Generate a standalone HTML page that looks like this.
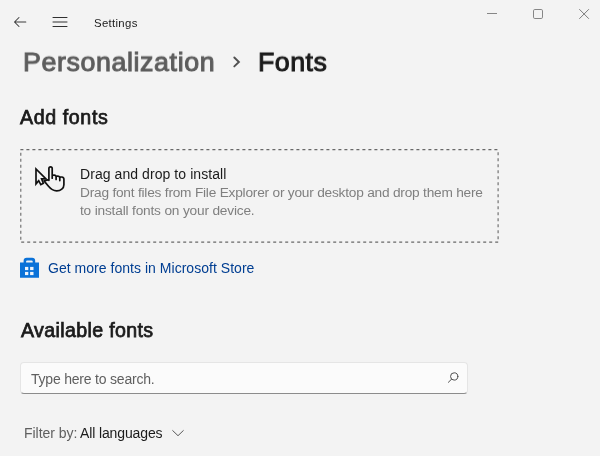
<!DOCTYPE html>
<html lang="en">
<head>
<meta charset="utf-8">
<title>Settings</title>
<style>
html,body{margin:0;padding:0;}
body{width:600px;height:456px;overflow:hidden;background:#f3f3f3;position:relative;font-family:"Liberation Sans",sans-serif;color:#1b1b1b;}
.t{position:absolute;white-space:nowrap;line-height:1;transform-origin:0 0;will-change:transform;}
svg{position:absolute;overflow:visible;}
#title{left:94px;top:17.600px;font-size:11.4px;letter-spacing:0.31px;color:#1b1b1b;}
#crumb1{left:23.200px;top:49.900px;transform:scaleY(0.956);font-size:26.8px;letter-spacing:0.6px;color:#5d5d5d;-webkit-text-stroke:1px #5d5d5d;}
#crumb2{left:258.200px;top:49.900px;transform:scaleY(0.956);font-size:26.8px;letter-spacing:0.45px;color:#1b1b1b;-webkit-text-stroke:1px #1b1b1b;}
#h1{left:20.4px;top:107.5px;font-size:19.6px;letter-spacing:0.62px;-webkit-text-stroke:0.75px #1b1b1b;}
#h2{left:20.5px;top:320.5px;font-size:19.6px;letter-spacing:0.36px;-webkit-text-stroke:0.75px #1b1b1b;}
#d1{left:80px;top:167px;font-size:14px;letter-spacing:0.07px;}
#d2{left:80px;top:186px;font-size:13.7px;letter-spacing:-0.216px;color:#7f7f7f;}
#d3{left:80px;top:204px;font-size:13.7px;letter-spacing:-0.182px;color:#7f7f7f;}
#link{left:48px;top:261px;font-size:14px;letter-spacing:0.03px;color:#003e92;}
#search{position:absolute;left:20px;top:362px;width:448px;height:32px;box-sizing:border-box;background:#fbfbfb;border:1px solid #e5e5e5;border-bottom:1px solid #8c8c8c;border-radius:4px;}
#ph{left:31.300px;top:372px;font-size:14px;letter-spacing:-0.207px;color:#5f5f5f;}
#f1{left:24px;top:426px;font-size:14px;letter-spacing:-0.040px;color:#5f5f5f;}
#f2{left:80.200px;top:426px;font-size:14px;letter-spacing:-0.122px;color:#1b1b1b;}
</style>
</head>
<body>
<!-- title bar -->
<svg id="back" width="16" height="16" style="left:12px;top:14px" viewBox="0 0 16 16"><path d="M13.800 8H2.500M7 3.500L2.500 8L7 12.500" fill="none" stroke="#3c3c3c" stroke-width="1.050" stroke-linecap="round" stroke-linejoin="round"/></svg>
<svg id="menu" width="16" height="16" style="left:52px;top:14px" viewBox="0 0 16 16"><path d="M1 3.500H15M1 8H15M1 12.500H15" fill="none" stroke="#303030" stroke-width="1" stroke-linecap="round"/></svg>
<div class="t" id="title">Settings</div>
<svg id="wc" width="120" height="30" style="left:480px;top:0" viewBox="0 0 120 30"><g fill="none" stroke="#868686" stroke-width="1"><path d="M7 13.500H17"/><rect x="53.500" y="9.500" width="9" height="9" rx="1.300"/><path d="M99.300 9.200L108.900 18.800M108.900 9.200L99.300 18.800" stroke="#7c7c7c"/></g></svg>

<div class="t" id="crumb1">Personalization</div>
<svg id="chev" width="12" height="14" style="left:230px;top:55px" viewBox="0 0 12 14"><path d="M4.300 2.500L8.900 6.950L4.300 11.400" fill="none" stroke="#505050" stroke-width="1.900" stroke-linecap="round" stroke-linejoin="miter"/></svg>
<div class="t" id="crumb2">Fonts</div>

<div class="t" id="h1">Add fonts</div>
<svg id="drop" width="482" height="96" style="left:18px;top:147px" viewBox="18 147 482 96"><g fill="none" stroke="#686868" stroke-width="1.100"><path d="M20.400 149.600H498.500" stroke-dasharray="3 3"/><path d="M21.200 242.100H498.500" stroke-dasharray="3 3"/><path d="M20.800 152.700V241" stroke-dasharray="3 3"/><path d="M498.100 152.200V241.500" stroke-dasharray="3 3"/></g></svg>
<svg id="hand" width="40" height="35" style="left:30px;top:160px" viewBox="0 0 40 35"><g fill="none" stroke="#111" stroke-width="1.700" stroke-linejoin="round" stroke-linecap="round"><path d="M6 9V23.900L8.700 20.700L10.800 24.700L13.300 23.300L11.600 18.900L16 18.900Z" stroke-linejoin="miter" stroke-miterlimit="6"/><path d="M18.900 20.300V8.500a1.650 1.650 0 0 1 3.300 0V18.200M22.200 16.300C22.200 14.600 26.100 14.600 26.100 16.700V19.500M26.100 17.200C26.100 15.700 29.800 15.700 29.800 17.800V20.600M29.800 18C29.800 16.400 33.900 16.600 33.900 19.200V24.700C33.900 28.300 30.700 30.800 26.700 30.800C22.700 30.800 20.500 28.800 18.500 26.300L14 20.900L18.900 19.700"/></g></svg>
<div class="t" id="d1">Drag and drop to install</div>
<div class="t" id="d2">Drag font files from File Explorer or your desktop and drop them here</div>
<div class="t" id="d3">to install fonts on your device.</div>

<svg id="store" width="20" height="21" style="left:20px;top:257px" viewBox="0 0 20 21"><path d="M0 5.500H3.600V3.900A3.100 3.100 0 0 1 6.700 .800H12.100A3.100 3.100 0 0 1 15.200 3.900V5.500H19V20.700H0ZM6.100 5.500H12.700V4.600A1.100 1.100 0 0 0 11.600 3.500H7.200A1.100 1.100 0 0 0 6.100 4.600Z" fill="#0b72d8" fill-rule="evenodd"/><g fill="#eef4fb"><rect x="5" y="9.900" width="3.300" height="3.200"/><rect x="10.100" y="9.900" width="3.400" height="3.200"/><rect x="5" y="14.900" width="3.300" height="3.200"/><rect x="10.100" y="14.900" width="3.400" height="3.200"/></g></svg>
<div class="t" id="link">Get more fonts in Microsoft Store</div>

<div class="t" id="h2">Available fonts</div>
<div id="search"></div>
<div class="t" id="ph">Type here to search.</div>
<svg id="mag" width="14" height="14" style="left:446px;top:370px" viewBox="0 0 14 14"><g fill="none" stroke="#505050" stroke-width="1" stroke-linecap="round"><circle cx="8.200" cy="6.450" r="3.650"/><path d="M5.600 9.100L2.400 12.300"/></g></svg>

<div class="t" id="f1">Filter by:</div>
<div class="t" id="f2">All languages</div>
<svg id="dchev" width="14" height="8" style="left:171px;top:429px" viewBox="0 0 14 8"><path d="M1.700 1.600L7 6.700L12.300 1.600" fill="none" stroke="#585858" stroke-width="1" stroke-linecap="round" stroke-linejoin="round"/></svg>
</body>
</html>
